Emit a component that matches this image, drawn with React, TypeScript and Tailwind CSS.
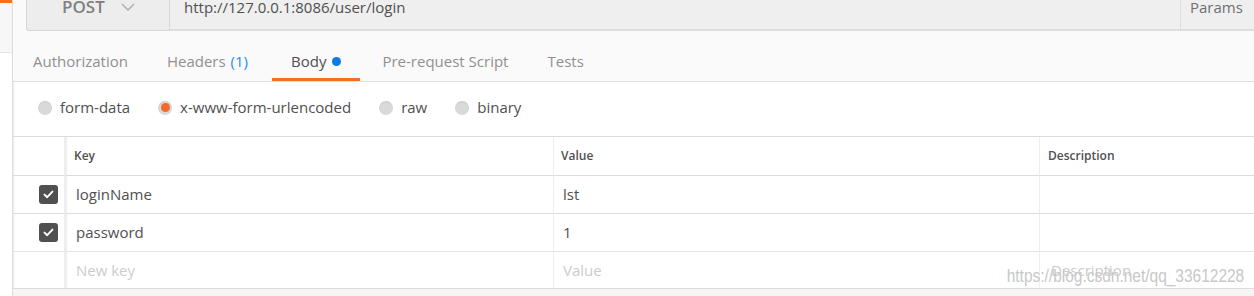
import type { ReactNode } from "react";

// Một hàng trong bảng key/value
type Row = { key: string; value: string; checked: boolean };

const rows: Row[] = [
  { key: "loginName", value: "lst", checked: true },
  { key: "password", value: "1", checked: true },
];

const tabs = ["Authorization", "Headers", "Body", "Pre-request Script", "Tests"];

function Checkbox() {
  return (
    <span className="flex h-[19px] w-[19px] items-center justify-center rounded-[3px] bg-[#505050]">
      <svg width="11" height="9" viewBox="0 0 11 9" fill="none">
        <path d="M1.5 4.6 L4.2 7.2 L9.5 1.6" stroke="white" strokeWidth="1.9" strokeLinecap="round" strokeLinejoin="round" />
      </svg>
    </span>
  );
}

function Radio({ active, label }: { active?: boolean; label: string }) {
  return (
    <label className="flex items-center gap-[8px]">
      <span className="flex h-[14px] w-[14px] items-center justify-center rounded-full bg-[#d9d9d9] shadow-[inset_0_1px_1px_rgba(0,0,0,0.08)]">
        {active && <span className="h-[9px] w-[9px] rounded-full bg-[#f26b2a]" />}
      </span>
      <span className="text-[15px] text-[#505050]">{label}</span>
    </label>
  );
}

function Cell({ children, className = "" }: { children?: ReactNode; className?: string }) {
  return <div className={`flex items-center border-l border-[#eeeeee] ${className}`}>{children}</div>;
}

export default function App() {
  return (
    <div
      className="relative flex h-[296px] w-[1254px] overflow-hidden bg-white"
      style={{ fontFamily: '"Open Sans", "Noto Sans", sans-serif' }}
    >
      {/* Mảnh sidebar bên trái */}
      <div className="flex w-[13px] shrink-0 flex-col border-r border-[#dcdcdc] shadow-[1px_0_2px_rgba(0,0,0,0.08)]">
        <div className="h-[3px] bg-[#f47023]" />
        <div className="h-[50px] border-b border-[#e6e6e6] bg-[#f7f7f7]" />
        <div className="flex-1 bg-white" />
      </div>

      <div className="flex min-w-0 flex-1 flex-col">
        {/* Thanh URL */}
        <div className="flex h-[31px] bg-[#fafafa]">
          <div className="ml-[13px] flex w-[144px] items-center rounded-bl-[3px] border border-t-0 border-[#d8d8d8] bg-[#ededed] pb-[16px] pl-[35px]">
            <span className="text-[17px] font-semibold text-[#808080]">POST</span>
            <svg className="ml-[16px]" width="14" height="8" viewBox="0 0 14 8" fill="none">
              <path d="M1 1 L7 7 L13 1" stroke="#b0b0b0" strokeWidth="1.5" />
            </svg>
          </div>
          <div className="flex flex-1 items-center border-b-[2px] border-[#dedede] bg-[#efefef] pb-[14px] pl-[14px]">
            <span className="text-[15px] text-[#505050]">http://127.0.0.1:8086/user/login</span>
          </div>
          <div className="flex w-[74px] items-center border-b-[2px] border-l border-[#dedede] bg-[#efefef] pb-[14px] pl-[9px]">
            <span className="text-[15px] text-[#707070]">Params</span>
          </div>
        </div>

        {/* Tabs */}
        <div className="flex h-[51px] items-stretch gap-[1px] border-b border-[#e0e0e0] bg-[#fafafa] pl-[1px]">
          {tabs.map((t) => {
            const active = t === "Body";
            return (
              <div
                key={t}
                className={`flex items-center border-b-[3px] px-[19px] pt-[13px] text-[15px] ${
                  active ? "ml-[4px] mr-[2px] border-[#f47023] text-[#505050]" : "border-transparent text-[#909090]"
                }`}
              >
                {t}
                {t === "Headers" && <span className="ml-[5px] text-[#2a8ee8]">(1)</span>}
                {active && <span className="ml-[6px] h-[9px] w-[9px] rounded-full bg-[#0b7ae6]" />}
              </div>
            );
          })}
        </div>

        {/* Kiểu body */}
        <div className="flex h-[55px] items-center gap-[28px] border-b border-[#dcdcdc] pb-[3px] pl-[25px]">
          <Radio label="form-data" />
          <Radio label="x-www-form-urlencoded" active />
          <Radio label="raw" />
          <Radio label="binary" />
        </div>

        {/* Bảng key / value */}
        <div className="grid grid-cols-[51px_489px_486px_1fr] border-b border-[#dcdcdc]">
          <div className="h-[38px]" />
          <Cell className="border-l-[3px] pl-[7px] text-[12px] font-semibold text-[#505050]">Key</Cell>
          <Cell className="pl-[7px] text-[12px] font-semibold text-[#505050]">Value</Cell>
          <Cell className="pl-[8px] text-[12px] font-semibold text-[#505050]">Description</Cell>

          {rows.map((r) => (
            <div key={r.key} className="contents">
              <div className="flex h-[38px] items-center justify-end border-t border-[#dcdcdc] pr-[6px]">
                {r.checked && <Checkbox />}
              </div>
              <Cell className="border-l-[3px] border-t border-t-[#dcdcdc] pl-[9px] text-[15px] text-[#505050]">{r.key}</Cell>
              <Cell className="border-t border-t-[#dcdcdc] pl-[9px] text-[15px] text-[#505050]">{r.value}</Cell>
              <Cell className="border-t border-t-[#dcdcdc]" />
            </div>
          ))}

          <div className="h-[37px] border-t border-[#e4e4e4]" />
          <Cell className="border-l-[3px] border-t border-t-[#e4e4e4] pl-[9px] text-[15px] text-[#cccccc]">New key</Cell>
          <Cell className="border-t border-t-[#e4e4e4] pl-[9px] text-[15px] text-[#cccccc]">Value</Cell>
          <Cell className="border-t border-t-[#e4e4e4] pl-[11px] text-[15px] text-[#cccccc]">Description</Cell>
        </div>

        <div className="flex-1 bg-[#f5f5f5]" />
      </div>

      {/* Watermark */}
      <span
        className="pointer-events-none absolute bottom-[6px] right-[10px] text-[18px] text-[#c8c8c8]"
        style={{ fontFamily: '"Liberation Sans", sans-serif', transform: "scaleX(0.86)", transformOrigin: "right" }}
      >
        https://blog.csdn.net/qq_33612228
      </span>
    </div>
  );
}
